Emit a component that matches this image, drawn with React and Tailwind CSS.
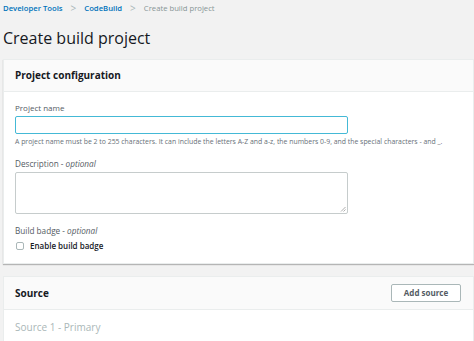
export default function App() {
  return (
    <div className="min-h-[341px] w-[474px] overflow-hidden bg-[#f2f2f2] text-[#16191f]" style={{ fontFamily: '"Open Sans", "Noto Sans", Arial, sans-serif' }}>
      {/* Breadcrumb */}
      <div className="flex items-center gap-[8px] pl-[3px] pt-[3px] text-[7.7px] leading-[10px]">
        <span className="font-semibold text-[#0073bb]">Developer Tools</span>
        <span className="text-[10px] text-[#aab7b8]">&gt;</span>
        <span className="font-semibold text-[#0073bb]">CodeBuild</span>
        <span className="text-[10px] text-[#aab7b8]">&gt;</span>
        <span className="text-[#879596]">Create build project</span>
      </div>

      <h1 className="mt-[15px] pl-[3px] text-[16px] leading-[20px] text-[#16191f]">Create build project</h1>

      {/* Project configuration */}
      <div className="ml-[3px] mt-[11px] border border-[#eaeded] bg-white shadow-[0_1px_1px_rgba(0,0,0,0.25)]">
        <div className="flex h-[32px] items-center border-b border-[#eaeded] bg-[#fafafa] px-[11px]">
          <span className="text-[10px] font-bold">Project configuration</span>
        </div>
        <div className="px-[11px] pb-[11px] pt-[11px]">
          <div className="text-[8px] leading-[10px] text-[#545b64]">Project name</div>
          <div className="mt-[3px] h-[18px] w-[333px] rounded-[2px] border-[1.5px] border-[#44b9d6] bg-white" />
          <div className="mt-[3px] whitespace-nowrap text-[6.9px] leading-[10px] text-[#687078]">
            A project name must be 2 to 255 characters. It can include the letters A-Z and a-z, the numbers 0-9, and the special characters - and _.
          </div>
          <div className="mt-[12px] text-[8.2px] leading-[10px] text-[#545b64]">
            Description - <span className="italic">optional</span>
          </div>
          <div className="relative mt-[3px] h-[42px] w-[333px] rounded-[2px] border border-[#c6cccc] bg-white">
            <svg className="absolute bottom-[1px] right-[1px]" width="6" height="6" viewBox="0 0 6 6">
              <path d="M5.5 1 L1 5.5 M5.5 3.5 L3.5 5.5" stroke="#999" strokeWidth="0.8" />
            </svg>
          </div>
          <div className="mt-[12px] text-[8.2px] leading-[10px] text-[#545b64]">
            Build badge - <span className="italic">optional</span>
          </div>
          <label className="mt-[4px] flex items-center gap-[6px]">
            <span className="ml-[1px] h-[8px] w-[8px] rounded-[2px] border border-[#aab7b8] bg-white" />
            <span className="text-[8px] leading-[12px] font-semibold text-[#16191f]">Enable build badge</span>
          </label>
        </div>
      </div>

      {/* Source */}
      <div className="ml-[3px] mt-[12px] border border-[#eaeded] bg-white">
        <div className="flex h-[33px] items-center justify-between border-b border-[#eaeded] bg-[#fafafa] pl-[11px] pr-[12px]">
          <span className="text-[10px] font-bold">Source</span>
          <button className="flex h-[18px] w-[70px] items-center justify-center rounded-[2px] border border-[#aab7b8] bg-white text-[8px] font-bold text-[#545b64]">
            Add source
          </button>
        </div>
        <div className="px-[11px] pb-[10px] pt-[10px] text-[10px] leading-[14px] text-[#aab7b8]">Source 1 - Primary</div>
      </div>
    </div>
  );
}
